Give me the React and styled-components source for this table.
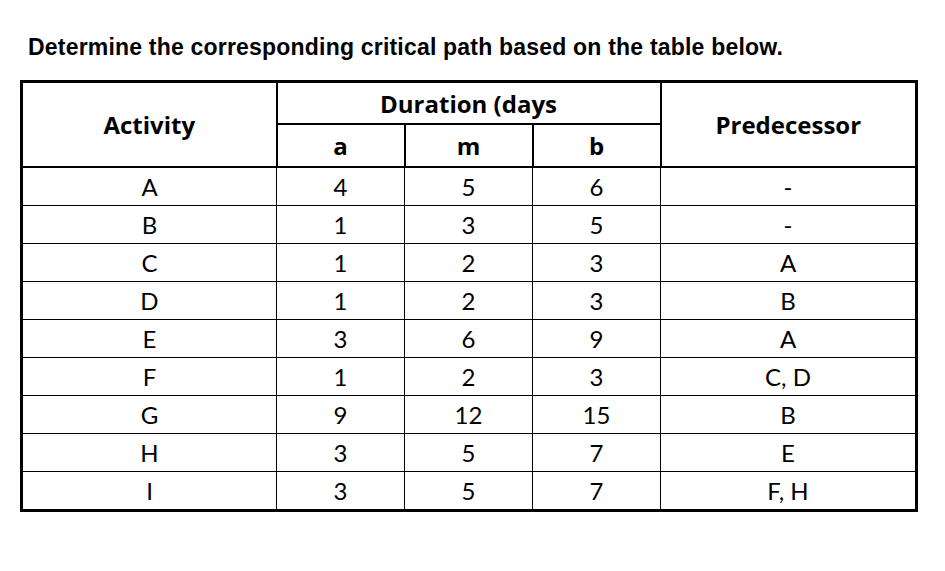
import React from "react";
import styled, { createGlobalStyle } from "styled-components";

const Global = createGlobalStyle`
  html, body { margin: 0; padding: 0; background: #fff; }
  body { font-family: "Liberation Sans", Arial, sans-serif; color: #000; }
`;

const Page = styled.div`
  width: 945px;
  height: 571px;
  padding: 34px 0 0 20px;
  box-sizing: border-box;
`;

const Title = styled.h1`
  margin: 0 0 0 8px;
  font-family: "Liberation Sans", Arial, sans-serif;
  font-weight: 700;
  font-size: 23px;
  letter-spacing: 0.2px;
  line-height: 26px;
`;

const Table = styled.table`
  margin-top: 20px;
  width: 895px;
  border-collapse: collapse;
  table-layout: fixed;
  border: 3px solid #000;
  font-family: Lato, "Open Sans", sans-serif;
`;

const HeadCell = styled.th`
  border: 2px solid #000;
  font-family: "Open Sans", Lato, sans-serif;
  font-weight: 700;
  font-size: 24px;
  letter-spacing: 0;
  height: ${(p) => p.$h}px;
  padding: 0;
  text-align: center;
  vertical-align: middle;
`;

const Cell = styled.td`
  border: 1px solid #000;
  font-size: 24px;
  font-weight: 400;
  height: 37px;
  padding: 0;
  text-align: center;
  vertical-align: middle;
`;

const rows = [
  ["A", "4", "5", "6", "-"],
  ["B", "1", "3", "5", "-"],
  ["C", "1", "2", "3", "A"],
  ["D", "1", "2", "3", "B"],
  ["E", "3", "6", "9", "A"],
  ["F", "1", "2", "3", "C, D"],
  ["G", "9", "12", "15", "B"],
  ["H", "3", "5", "7", "E"],
  ["I", "3", "5", "7", "F, H"],
];

export default function App() {
  return (
    <Page>
      <Global />
      <Title>Determine the corresponding critical path based on the table below.</Title>
      <Table>
        <colgroup>
          <col style={{ width: 255 }} />
          <col style={{ width: 128 }} />
          <col style={{ width: 128 }} />
          <col style={{ width: 128 }} />
          <col style={{ width: 256 }} />
        </colgroup>
        <thead>
          <tr>
            <HeadCell rowSpan={2} $h={40}>Activity</HeadCell>
            <HeadCell colSpan={3} $h={40}>Duration (days</HeadCell>
            <HeadCell rowSpan={2} $h={41}>Predecessor</HeadCell>
          </tr>
          <tr>
            <HeadCell $h={41}>a</HeadCell>
            <HeadCell $h={41}>m</HeadCell>
            <HeadCell $h={41}>b</HeadCell>
          </tr>
        </thead>
        <tbody>
          {rows.map((r) => (
            <tr key={r[0]}>
              {r.map((v, i) => (
                <Cell key={i}>{v}</Cell>
              ))}
            </tr>
          ))}
        </tbody>
      </Table>
    </Page>
  );
}
